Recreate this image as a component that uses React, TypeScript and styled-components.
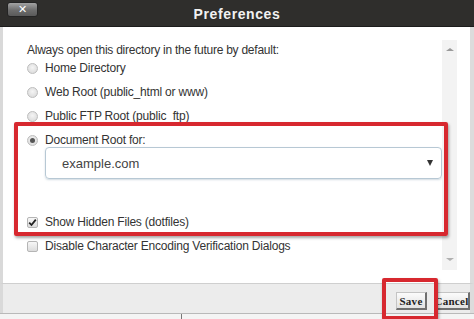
import React from "react";
import styled, { createGlobalStyle } from "styled-components";

const Global = createGlobalStyle`
  html, body { margin: 0; padding: 0; background: #ffffff; }
  body { width: 474px; height: 319px; overflow: hidden; font-family: "Liberation Sans", Arial, sans-serif; }
`;

const Window = styled.div`
  position: relative;
  width: 474px;
  height: 319px;
  display: flex;
  flex-direction: column;
  background: #ffffff;
  overflow: hidden;
`;

const TitleBar = styled.div`
  height: 26px;
  flex: none;
  display: flex;
  align-items: center;
  position: relative;
  background: #2f2e2c;
  border-bottom: 1px solid #1c1c1c;
`;

const CloseButton = styled.div`
  position: absolute;
  left: 7px;
  top: 2px;
  width: 31px;
  height: 15px;
  box-sizing: border-box;
  border: 1px solid #242424;
  border-radius: 3px;
  background: linear-gradient(#a3a3a3, #6d6d6d 55%, #595959);
  color: #ffffff;
  font: bold 11px "DejaVu Sans", sans-serif;
  display: flex;
  align-items: center;
  justify-content: center;
  line-height: 1;
`;

const Title = styled.div`
  flex: 1;
  text-align: center;
  color: #f2f2f2;
  font: bold 14px "Liberation Sans", Arial, sans-serif;
  letter-spacing: 0.6px;
  padding-top: 1px;
`;

const Body = styled.div`
  height: 256px;
  flex: none;
  display: flex;
  border-left: 3px solid #d9d9d9;
  border-right: 4px solid #dcdcdc;
  background: #ffffff;
`;

const Content = styled.div`
  flex: 1;
  padding: 16px 0 0 24px;
  display: flex;
  flex-direction: column;
  color: #333333;
  font-size: 12px;
`;

const Heading = styled.div`
  height: 13px;
  line-height: 14px;
  letter-spacing: -0.25px;
`;

const Row = styled.div<{ $h?: number }>`
  height: ${(p) => p.$h ?? 24}px;
  display: flex;
  align-items: center;
  gap: 7px;
  letter-spacing: -0.2px;
`;

const Radio = styled.span<{ $on?: boolean }>`
  width: 11px;
  height: 11px;
  box-sizing: border-box;
  border-radius: 50%;
  border: 1px solid #bdbdbd;
  background: radial-gradient(circle at 50% 40%, #f4f4f4, #d6d6d6);
  display: flex;
  align-items: center;
  justify-content: center;
  flex: none;
  &::after {
    content: "";
    width: 5px;
    height: 5px;
    border-radius: 50%;
    background: ${(p) => (p.$on ? "#555" : "transparent")};
  }
`;

const Check = styled.span<{ $on?: boolean }>`
  width: 11px;
  height: 11px;
  box-sizing: border-box;
  border-radius: 2px;
  border: 1px solid #b5b5b5;
  background: linear-gradient(#f7f7f7, #dcdcdc);
  display: flex;
  align-items: center;
  justify-content: center;
  flex: none;
`;

const Select = styled.div`
  margin-left: 18px;
  margin-top: -5px;
  width: 397px;
  height: 32px;
  box-sizing: border-box;
  border: 1px solid #b7c8d4;
  border-radius: 4px;
  box-shadow: 0 1px 2px rgba(120, 150, 170, 0.35);
  display: flex;
  align-items: center;
  padding: 0 8px 0 16px;
  font-size: 13px;
  color: #444444;
`;

const SelectText = styled.span`
  flex: 1;
`;

const Caret = styled.span`
  width: 0;
  height: 0;
  border-left: 3.5px solid transparent;
  border-right: 3.5px solid transparent;
  border-top: 6px solid #333;
`;

const Gap = styled.div<{ $h: number }>`
  height: ${(p) => p.$h}px;
  flex: none;
`;

const Scrollbar = styled.div`
  width: 17px;
  margin: 13px 13px 13px 0;
  background: #f3f3f3;
  display: flex;
  flex-direction: column;
  align-items: center;
  justify-content: space-between;
  padding: 8px 0 9px;
  box-sizing: border-box;
`;

const Arrow = styled.span<{ $down?: boolean }>`
  width: 0;
  height: 0;
  border-left: 4px solid transparent;
  border-right: 4px solid transparent;
  ${(p) =>
    p.$down ? "border-top: 3px solid #b0b0b0;" : "border-bottom: 3px solid #9a9a9a;"}
`;

const Footer = styled.div`
  height: 30px;
  flex: none;
  box-sizing: border-box;
  border-top: 1px solid #cfcfcf;
  border-left: 3px solid #d9d9d9;
  border-right: 4px solid #dcdcdc;
  background: #ececec;
  display: flex;
  justify-content: flex-end;
  align-items: flex-start;
  padding: 8px 0 0;
  gap: 7px;
`;

const Button = styled.div<{ $w: number }>`
  width: ${(p) => p.$w}px;
  height: 18px;
  box-sizing: border-box;
  border: 1px solid #c4c4c4;
  border-right: 2px solid #6f6f6f;
  border-bottom: 2px solid #6f6f6f;
  background: linear-gradient(#fbfbfb, #e2e2e2);
  font: bold 11px "Liberation Serif", "Times New Roman", serif;
  color: #222;
  display: flex;
  align-items: center;
  justify-content: center;
  letter-spacing: 0.3px;
`;

const BottomStrip = styled.div`
  flex: 1;
  border-top: 1px solid #b9b9b9;
  background: #f4f4f4;
  display: flex;
  padding-left: 181px;
`;

const Tick = styled.span`
  width: 1px;
  background: #777;
`;

const Highlight = styled.div<{ $x: number; $y: number; $w: number; $h: number }>`
  position: absolute;
  left: ${(p) => p.$x}px;
  top: ${(p) => p.$y}px;
  width: ${(p) => p.$w}px;
  height: ${(p) => p.$h}px;
  box-sizing: border-box;
  border: 4px solid #d7282f;
  border-radius: 2px;
  box-shadow: 1px 2px 3px rgba(0, 0, 0, 0.35);
  pointer-events: none;
`;

export default function App() {
  return (
    <>
      <Global />
      <Window>
        <TitleBar>
          <CloseButton>✕</CloseButton>
          <Title>Preferences</Title>
        </TitleBar>
        <Body>
          <Content>
            <Heading>Always open this directory in the future by default:</Heading>
            <Row>
              <Radio />
              Home Directory
            </Row>
            <Row>
              <Radio />
              Web Root (public_html or www)
            </Row>
            <Row>
              <Radio />
              Public FTP Root (public_ftp)
            </Row>
            <Row>
              <Radio $on />
              Document Root for:
            </Row>
            <Select>
              <SelectText>example.com</SelectText>
              <Caret />
            </Select>
            <Gap $h={31} />
            <Row>
              <Check $on>
                <svg width="9" height="9" viewBox="0 0 9 9">
                  <path d="M1.2 4.6 L3.5 7 L7.8 1.6" fill="none" stroke="#222" strokeWidth="1.8" />
                </svg>
              </Check>
              Show Hidden Files (dotfiles)
            </Row>
            <Row>
              <Check />
              Disable Character Encoding Verification Dialogs
            </Row>
          </Content>
          <Scrollbar>
            <Arrow />
            <Arrow $down />
          </Scrollbar>
        </Body>
        <Footer>
          <Button $w={31}>Save</Button>
          <Button $w={36}>Cancel</Button>
        </Footer>
        <BottomStrip>
          <Tick />
        </BottomStrip>
        <Highlight $x={14} $y={122} $w={434} $h={114} />
        <Highlight $x={382} $y={278} $w={56} $h={42} />
      </Window>
    </>
  );
}
